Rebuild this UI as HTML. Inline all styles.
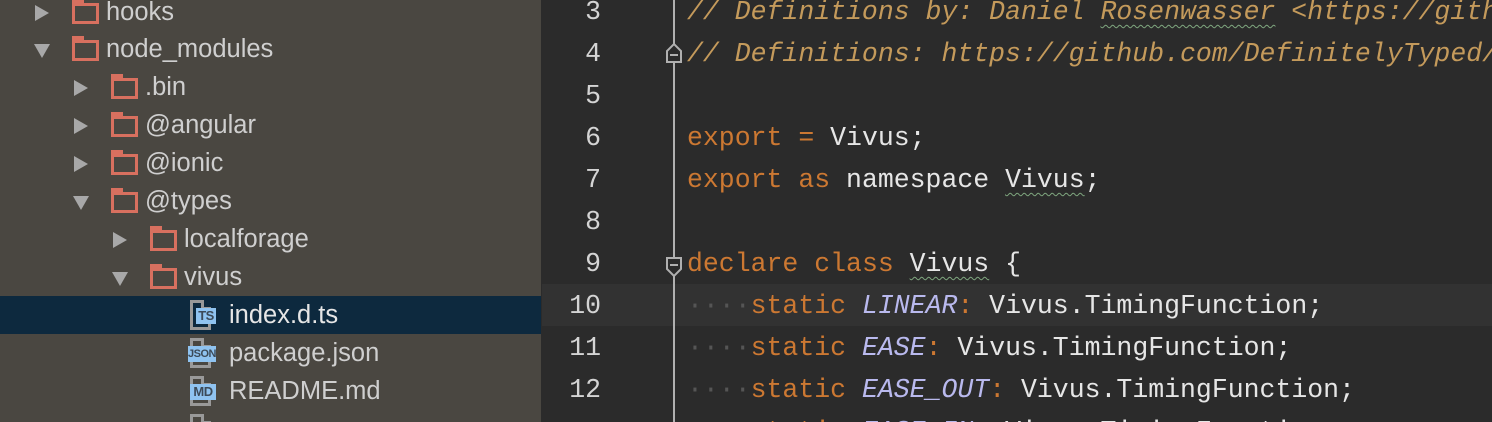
<!DOCTYPE html>
<html style="width:1492px;height:422px;overflow:hidden"><head><meta charset="utf-8"><style>
*{margin:0;padding:0;box-sizing:border-box}
body{width:1492px;height:422px;overflow:hidden;background:#2b2b2b;position:relative;font-family:"Liberation Sans",sans-serif}
#side{position:absolute;left:0;top:0;width:541px;height:422px;background:#4a4741;overflow:hidden}
.row{position:absolute;left:0;width:541px;height:38px;color:#cfcfcf;font-size:25.5px;line-height:38px}
.row.sel{background:#0d293e;color:#e6e6e6}
.arr{position:absolute;top:12px;width:0;height:0}
.arr.r{border-left:14px solid #a8a8a8;border-top:8px solid transparent;border-bottom:8px solid transparent}
.arr.d{top:14px;border-top:14px solid #a8a8a8;border-left:8px solid transparent;border-right:8px solid transparent}
.fold{position:absolute;top:10px;width:27px;height:21px;border:3px solid #d8705f}
.fold:before{content:"";position:absolute;left:-3px;top:-7px;width:12px;height:5px;background:#d8705f}
.t{position:absolute;top:0}
.file{position:absolute;top:4px;width:21px;height:30px;border:3px solid #999}
.file:after{content:"";position:absolute;right:-3px;top:-3px;width:7px;height:7px;background:#4a4741;border-left:3px solid #999;border-bottom:3px solid #999}
.sel .file:after{background:#0d293e}
.lab{position:absolute;top:12px;height:16px;background:#8fc3f0;color:#3c4a58;font:bold 13px/16px "Liberation Sans",sans-serif;text-align:center;letter-spacing:-0.5px}
#code{position:absolute;left:541px;top:0;right:0;height:422px;overflow:hidden;font-family:"Liberation Mono",monospace;font-size:26.5px}
.cur{position:absolute;left:1px;right:0;top:284px;height:42px;background:#323232}
.ln{position:absolute;left:0;width:60px;text-align:right;color:#d4d4d4;line-height:42px;height:42px}
.cl{position:absolute;left:146px;white-space:pre;line-height:42px;height:42px;color:#e6e6e6}
.vline{position:absolute;left:132px;top:0;width:2px;height:422px;background:#b0b0b0}
.c{color:#c49a5b;font-style:italic}
.k{color:#cc7832}
.i{color:#b9b9ee;font-style:italic}
.d{color:#555}
.w{text-decoration:underline wavy #7fa77f;text-underline-offset:5px;text-decoration-thickness:1px}
.fm{position:absolute;left:124px;width:18px;height:22px}
</style></head><body>
<div id="side">
 <div class="row" style="top:-7px"><div class="arr r" style="left:35px"></div><div class="fold" style="left:72px"></div><span class="t" style="left:106px">hooks</span></div>
 <div class="row" style="top:30px"><div class="arr d" style="left:34px"></div><div class="fold" style="left:72px"></div><span class="t" style="left:106px">node_modules</span></div>
 <div class="row" style="top:68px"><div class="arr r" style="left:74px"></div><div class="fold" style="left:111px"></div><span class="t" style="left:145px">.bin</span></div>
 <div class="row" style="top:106px"><div class="arr r" style="left:74px"></div><div class="fold" style="left:111px"></div><span class="t" style="left:145px">@angular</span></div>
 <div class="row" style="top:144px"><div class="arr r" style="left:74px"></div><div class="fold" style="left:111px"></div><span class="t" style="left:145px">@ionic</span></div>
 <div class="row" style="top:182px"><div class="arr d" style="left:73px"></div><div class="fold" style="left:111px"></div><span class="t" style="left:145px">@types</span></div>
 <div class="row" style="top:220px"><div class="arr r" style="left:113px"></div><div class="fold" style="left:150px"></div><span class="t" style="left:184px">localforage</span></div>
 <div class="row" style="top:258px"><div class="arr d" style="left:112px"></div><div class="fold" style="left:150px"></div><span class="t" style="left:184px">vivus</span></div>
 <div class="row sel" style="top:296px"><div class="file" style="left:190px"></div><div class="lab" style="left:196px;width:20px">TS</div><span class="t" style="left:229px">index.d.ts</span></div>
 <div class="row" style="top:334px"><div class="file" style="left:190px"></div><div class="lab" style="left:188px;width:28px;font-size:11px">JSON</div><span class="t" style="left:229px">package.json</span></div>
 <div class="row" style="top:372px"><div class="file" style="left:190px"></div><div class="lab" style="left:190px;width:26px">MD</div><span class="t" style="left:229px">README.md</span></div>
 <div class="row" style="top:410px"><div class="file" style="left:190px"></div></div>
</div>
<div id="code">
 <div class="cur"></div>
 <div class="vline"></div>
 <svg class="fm" style="top:42px" viewBox="0 0 18 22"><path d="M2 20V9L9 2L16 9V20Z" fill="#2b2b2b" stroke="#b0b0b0" stroke-width="2"/><path d="M5 13H13" stroke="#b0b0b0" stroke-width="2"/></svg>
 <svg class="fm" style="top:256px" viewBox="0 0 18 22"><path d="M2 2V13L9 20L16 13V2Z" fill="#2b2b2b" stroke="#b0b0b0" stroke-width="2"/><path d="M5 9H13" stroke="#b0b0b0" stroke-width="2"/></svg>
 <div class="ln" style="top:-9px">3</div>
 <div class="ln" style="top:33px">4</div>
 <div class="ln" style="top:75px">5</div>
 <div class="ln" style="top:117px">6</div>
 <div class="ln" style="top:159px">7</div>
 <div class="ln" style="top:201px">8</div>
 <div class="ln" style="top:243px">9</div>
 <div class="ln" style="top:285px">10</div>
 <div class="ln" style="top:327px">11</div>
 <div class="ln" style="top:369px">12</div>
 <div class="cl c" style="top:-9px">// Definitions by: Daniel <span class="w">Rosenwasser</span> &lt;https://github.com/DanielRosenwasser&gt;</div>
 <div class="cl c" style="top:33px">// Definitions: https://github.com/DefinitelyTyped/DefinitelyTyped</div>
 <div class="cl" style="top:117px"><span class="k">export</span> <span class="k">=</span> Vivus;</div>
 <div class="cl" style="top:159px"><span class="k">export</span> <span class="k">as</span> namespace <span class="w">Vivus</span>;</div>
 <div class="cl" style="top:243px"><span class="k">declare</span> <span class="k">class</span> <span class="w">Vivus</span> {</div>
 <div class="cl" style="top:285px"><span class="d">····</span><span class="k">static</span> <span class="i">LINEAR</span><span class="k">:</span> Vivus.TimingFunction;</div>
 <div class="cl" style="top:327px"><span class="d">····</span><span class="k">static</span> <span class="i">EASE</span><span class="k">:</span> Vivus.TimingFunction;</div>
 <div class="cl" style="top:369px"><span class="d">····</span><span class="k">static</span> <span class="i">EASE_OUT</span><span class="k">:</span> Vivus.TimingFunction;</div>
 <div class="cl" style="top:411px"><span class="d">····</span><span class="k">static</span> <span class="i">EASE_IN</span><span class="k">:</span> Vivus.TimingFunction;</div>
</div>
</body></html>
